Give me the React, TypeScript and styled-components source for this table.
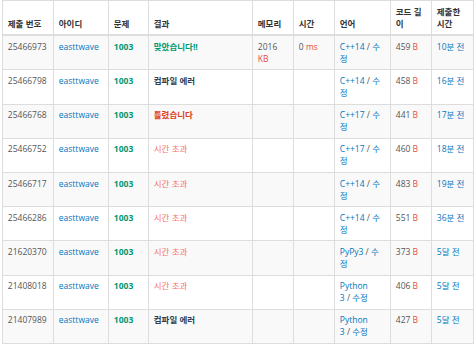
import styled, { createGlobalStyle } from "styled-components"

const GlobalStyle = createGlobalStyle`
  html, body {
    margin: 0;
    padding: 0;
    background: #fff;
  }
  body {
    padding: 0 1px 0 2px;
    font-family: "Open Sans", "Noto Sans CJK KR", sans-serif;
    font-size: 8.5px;
    color: #555;
  }
`

const Table = styled.table`
  width: 471px;
  table-layout: fixed;
  border-collapse: collapse;
  border: 1px solid #ddd;
`

const Col = styled.col<{ $w: number }>`
  width: ${(p) => p.$w}px;
`

const Th = styled.th`
  padding: 4.6px 4.8px;
  text-align: left;
  vertical-align: bottom;
  font-weight: 700;
  color: #333;
  line-height: 12px;
  border: 1px solid #ddd;
  border-bottom: 2px solid #ddd;
`

const Tr = styled.tr`
  &:nth-child(odd) {
    background: #f9f9f9;
  }
`

const Td = styled.td`
  padding: 4.6px 4.8px;
  vertical-align: top;
  line-height: 12px;
  height: 24px;
  border: 1px solid #ddd;
`

const Link = styled.a`
  color: #0076c0;
  text-decoration: none;
`

const Problem = styled.a`
  color: #009874;
  font-weight: 700;
  text-decoration: none;
`

type Kind = "ac" | "wa" | "tle" | "ce"

const resultColor: Record<Kind, string> = {
  ac: "#009874",
  wa: "#dd4124",
  tle: "#fa7268",
  ce: "#2c3e50",
}

const Result = styled.span<{ $kind: Kind }>`
  color: ${(p) => resultColor[p.$kind]};
  font-weight: ${(p) => (p.$kind === "tle" ? 400 : 700)};
`

const Unit = styled.span`
  color: #e74c3c;
`

type Row = {
  id: string
  result: string
  kind: Kind
  memory?: string
  time?: string
  lang: string
  len: string
  ago: string
}

const rows: Row[] = [
  { id: "25466973", result: "맞았습니다!!", kind: "ac", memory: "2016", time: "0", lang: "C++14", len: "459", ago: "10분 전" },
  { id: "25466798", result: "컴파일 에러", kind: "ce", lang: "C++14", len: "458", ago: "16분 전" },
  { id: "25466768", result: "틀렸습니다", kind: "wa", lang: "C++17", len: "441", ago: "17분 전" },
  { id: "25466752", result: "시간 초과", kind: "tle", lang: "C++17", len: "460", ago: "18분 전" },
  { id: "25466717", result: "시간 초과", kind: "tle", lang: "C++14", len: "483", ago: "19분 전" },
  { id: "25466286", result: "시간 초과", kind: "tle", lang: "C++14", len: "551", ago: "36분 전" },
  { id: "21620370", result: "시간 초과", kind: "tle", lang: "PyPy3", len: "373", ago: "5달 전" },
  { id: "21408018", result: "시간 초과", kind: "tle", lang: "Python 3", len: "406", ago: "5달 전" },
  { id: "21407989", result: "컴파일 에러", kind: "ce", lang: "Python 3", len: "427", ago: "5달 전" },
]

const widths = [51, 55, 40, 104, 41, 41, 56, 41, 42]
const headers = ["제출 번호", "아이디", "문제", "결과", "메모리", "시간", "언어", "코드 길이", "제출한 시간"]

function Lang({ name }: { name: string }) {
  // "Python 3" breaks after "Python" in the original page
  const [first, rest] = name.split(" ")
  if (rest) {
    return (
      <>
        <Link href="#">
          {first}
          <br />
          {rest}
        </Link>{" "}
        / <Link href="#">수정</Link>
      </>
    )
  }
  return (
    <>
      <Link href="#">{name}</Link> / <Link href="#">수정</Link>
    </>
  )
}

export default function App() {
  return (
    <>
      <GlobalStyle />
      <Table>
        <colgroup>
          {widths.map((w, i) => (
            <Col key={i} $w={w} />
          ))}
        </colgroup>
        <thead>
          <tr>
            {headers.map((h) => (
              <Th key={h}>{h}</Th>
            ))}
          </tr>
        </thead>
        <tbody>
          {rows.map((r) => (
            <Tr key={r.id}>
              <Td>{r.id}</Td>
              <Td>
                <Link href="#">easttwave</Link>
              </Td>
              <Td>
                <Problem href="#">1003</Problem>
              </Td>
              <Td>
                <Result $kind={r.kind}>{r.result}</Result>
              </Td>
              <Td>
                {r.memory && (
                  <>
                    {r.memory} <Unit>KB</Unit>
                  </>
                )}
              </Td>
              <Td>
                {r.time && (
                  <>
                    {r.time} <Unit>ms</Unit>
                  </>
                )}
              </Td>
              <Td>
                <Lang name={r.lang} />
              </Td>
              <Td>
                {r.len} <Unit>B</Unit>
              </Td>
              <Td>
                <Link href="#">{r.ago}</Link>
              </Td>
            </Tr>
          ))}
        </tbody>
      </Table>
    </>
  )
}
